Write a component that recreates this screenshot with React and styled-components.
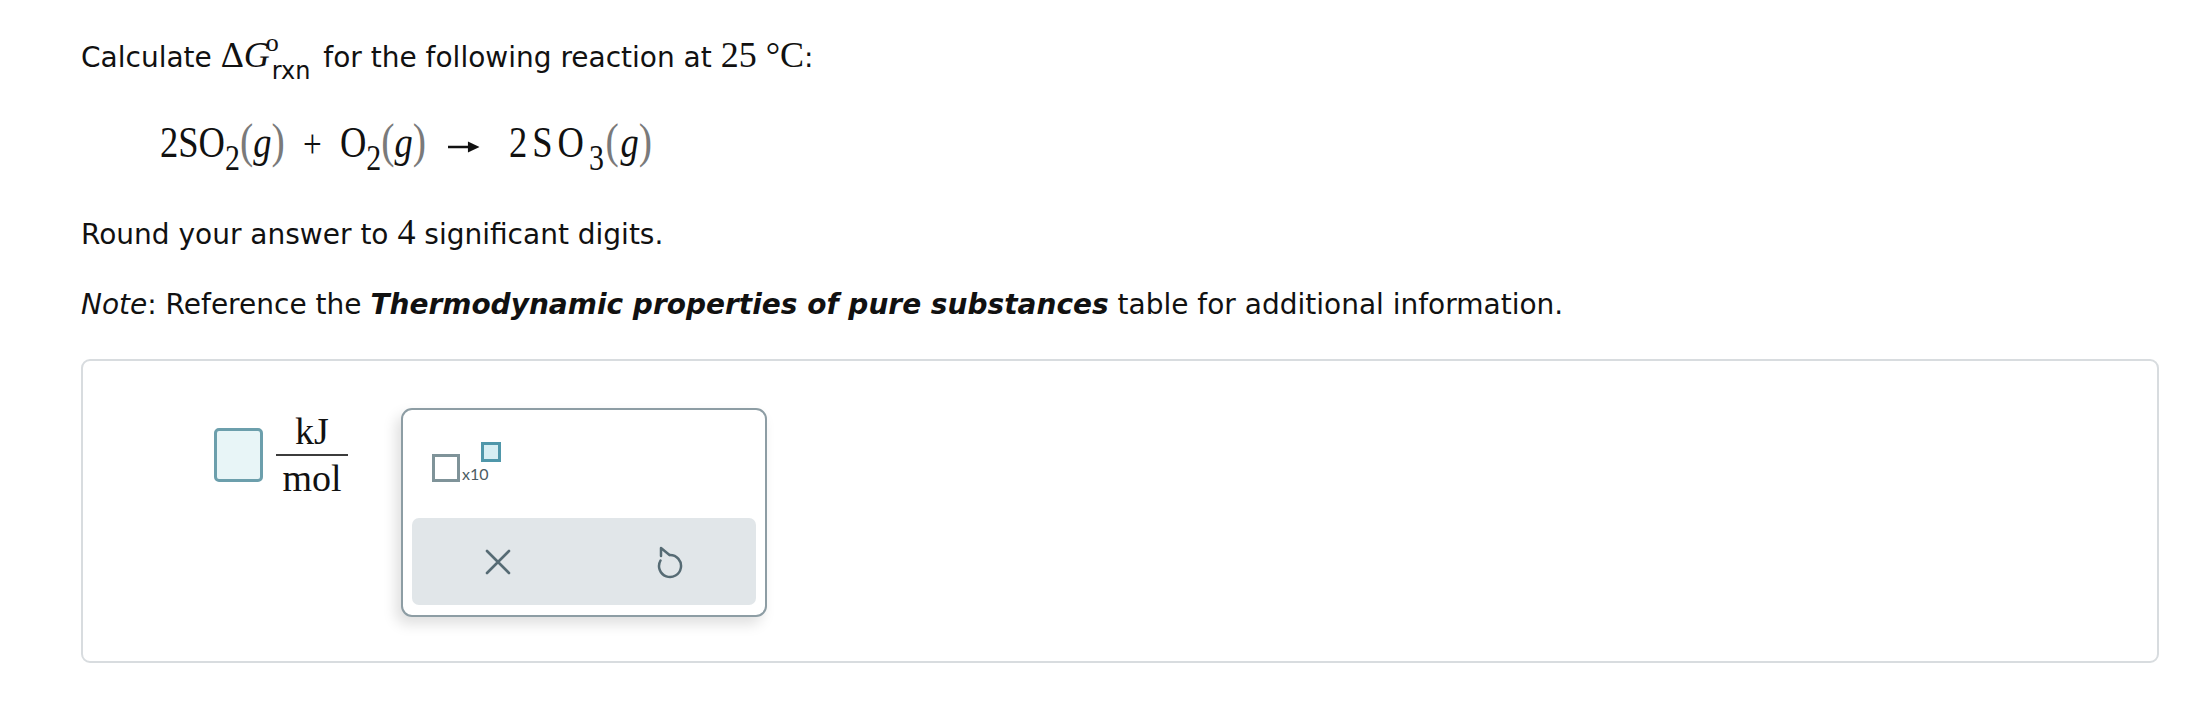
import React from 'react';
import styled, { createGlobalStyle } from 'styled-components';

const GlobalStyle = createGlobalStyle`
  html, body {
    margin: 0;
    padding: 0;
    background: #ffffff;
  }
  body {
    font-family: "DejaVu Sans", Verdana, sans-serif;
    color: #111111;
  }
`;

const Page = styled.div`
  padding: 38px 31px 40px 81px;
`;

const Line = styled.div`
  font-size: 28px;
  line-height: 40px;
  height: 40px;
  margin-top: ${p => p.gap || 0}px;
  white-space: nowrap;
`;

const Math = styled.span`
  font-family: "Liberation Serif", "Times New Roman", serif;
  font-size: 36px;
  line-height: 0;
  font-style: ${p => (p.italic ? 'italic' : 'normal')};
`;

const Sup = styled.span`
  font-family: "Liberation Serif", "Times New Roman", serif;
  font-size: 26px;
  line-height: 0;
  vertical-align: 16px;
  margin-left: -4px;
`;

const Sub = styled.span`
  font-size: 24px;
  line-height: 0;
  vertical-align: -12px;
  margin-left: -7px;
  margin-right: 4px;
`;

const Equation = styled.div`
  margin: 38px 0 0 79px;
  height: 50px;
  line-height: 50px;
  font-family: "Liberation Serif", "Times New Roman", serif;
  font-size: 44px;
  white-space: nowrap;
  transform: scaleX(0.83);
  transform-origin: left center;
`;

const EqSub = styled.span`
  font-size: 36px;
  line-height: 0;
  vertical-align: -13px;
`;

const Paren = styled.span`
  color: #7a7a7a;
  font-size: 48px;
  margin: 0 ${p => p.gap || 0}px;
`;

const Phase = styled.span`
  font-style: italic;
`;

const Op = styled.span`
  display: inline-block;
  margin: 0 ${p => p.gap}px;
  font-size: ${p => p.size}px;
`;

const ArrowMark = styled.svg`
  display: inline-block;
  vertical-align: middle;
  margin: 0 36px 0 26px;
`;

const Spaced = styled.span`
  letter-spacing: 6px;
`;

const Strong = styled.b`
  font-weight: bold;
  font-style: italic;
`;

const AnswerBox = styled.div`
  box-sizing: border-box;
  margin-top: 34px;
  height: 304px;
  border: 2px solid #d8dcdf;
  border-radius: 9px;
  padding: 47px 0 0 131px;
  display: flex;
  align-items: flex-start;
`;

const AnswerGroup = styled.div`
  display: flex;
  align-items: center;
  margin-top: 3px;
`;

const InputSquare = styled.div`
  box-sizing: border-box;
  width: 49px;
  height: 54px;
  border: 3px solid #6c9fac;
  border-radius: 5px;
  background: #e8f5f7;
`;

const Fraction = styled.div`
  display: flex;
  flex-direction: column;
  align-items: center;
  margin-left: 13px;
  width: 72px;
  font-family: "Liberation Serif", "Times New Roman", serif;
  font-size: 38px;
  line-height: 40px;
`;

const Rule = styled.div`
  width: 72px;
  height: 2px;
  background: #3c3c3c;
  margin: 3px 0 2px;
`;

const Popup = styled.div`
  box-sizing: border-box;
  width: 366px;
  height: 209px;
  margin-left: 53px;
  border: 2px solid #8d9da4;
  border-radius: 11px;
  background: #ffffff;
  box-shadow: -5px 7px 14px rgba(0, 0, 0, 0.13);
  display: flex;
  flex-direction: column;
`;

const TemplateRow = styled.div`
  display: flex;
  align-items: flex-start;
  margin: 32px 0 0 29px;
`;

const Slot = styled.div`
  box-sizing: border-box;
  width: ${p => p.size}px;
  height: ${p => p.size}px;
  border: ${p => p.weight}px solid ${p => p.color};
  background: ${p => p.fill};
  margin-top: ${p => p.top || 0}px;
  margin-left: ${p => p.left || 0}px;
`;

const Times10 = styled.span`
  font-family: Lato, "Open Sans", sans-serif;
  font-size: 16px;
  line-height: 16px;
  color: #4b5b62;
  margin-top: 24px;
  margin-left: 2px;
`;

const ButtonBar = styled.div`
  margin: auto 9px 10px;
  height: 87px;
  border-radius: 7px;
  background: #e1e6e9;
  display: grid;
  grid-template-columns: 1fr 1fr;
  align-items: center;
  justify-items: center;
`;

const IconButton = styled.div`
  display: flex;
  align-items: center;
  justify-content: center;
`;

const CloseIcon = () => (
  <svg width="26" height="26" viewBox="0 0 26 26" fill="none" stroke="#566b74" strokeWidth="2.6" strokeLinecap="round">
    <path d="M2 2 L24 24 M24 2 L2 24" />
  </svg>
);

const UndoIcon = () => (
  <svg width="26" height="34" viewBox="0 0 26 34" fill="none" stroke="#566b74" strokeWidth="2.5" strokeLinecap="round" strokeLinejoin="round">
    <path d="M13 10 A11 11 0 1 1 3.5 15.5" />
    <path d="M4 11 V3 L12.5 10" />
  </svg>
);

const ReactionArrow = () => (
  <ArrowMark width="38" height="14" viewBox="0 0 38 14">
    <path d="M0 7 H26" stroke="#111" strokeWidth="2.6" />
    <path d="M24 1.5 L38 7 L24 12.5 Z" fill="#111" />
  </ArrowMark>
);

export default function App() {
  return (
    <>
      <GlobalStyle />
      <Page>
        <Line>
          Calculate <Math>Δ</Math><Math italic>G</Math>
          <Sup>o</Sup>
          <Sub>rxn</Sub> for the following reaction at <Math>25 °C</Math>:
        </Line>

        <Equation>
          2SO<EqSub>2</EqSub>
          <Paren>(</Paren><Phase>g</Phase><Paren>)</Paren>
          <Op size={40} gap={22}>+</Op>
          O<EqSub>2</EqSub>
          <Paren>(</Paren><Phase>g</Phase><Paren>)</Paren>
          <ReactionArrow />
          <Spaced>2SO</Spaced><EqSub>3</EqSub>
          <Paren gap={2}>(</Paren><Phase>g</Phase><Paren>)</Paren>
        </Equation>

        <Line gap={49}>
          Round your answer to <Math>4</Math> significant digits.
        </Line>

        <Line gap={30}>
          <i>Note</i>: Reference the <Strong>Thermodynamic properties of pure substances</Strong> table for additional information.
        </Line>

        <AnswerBox>
          <AnswerGroup>
            <InputSquare />
            <Fraction>
              <span>kJ</span>
              <Rule />
              <span>mol</span>
            </Fraction>
          </AnswerGroup>

          <Popup>
            <TemplateRow>
              <Slot size={28} weight={3} color="#7f9399" fill="#ffffff" top={12} />
              <Times10>x10</Times10>
              <Slot size={20} weight={3} color="#4f97aa" fill="#d6eef3" left={-8} />
            </TemplateRow>
            <ButtonBar>
              <IconButton><CloseIcon /></IconButton>
              <IconButton><UndoIcon /></IconButton>
            </ButtonBar>
          </Popup>
        </AnswerBox>
      </Page>
    </>
  );
}
